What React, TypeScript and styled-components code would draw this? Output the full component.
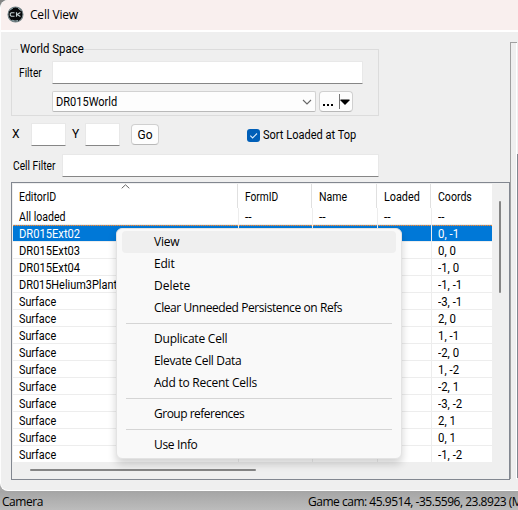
import React from "react";
import styled, { createGlobalStyle } from "styled-components";

const GlobalStyle = createGlobalStyle`
  * { box-sizing: border-box; }
  html, body { margin: 0; padding: 0; overflow: hidden; }
  body { width: 518px; height: 510px; background: #777; }
`;

const Desktop = styled.div`
  position: relative;
  width: 518px;
  height: 510px;
  overflow: hidden;
  display: flex;
  flex-direction: column;
  background: linear-gradient(#858585 0 12px, #a8a8a8 480px);
  font: 12px/16px Roboto, "Liberation Sans", sans-serif;
  color: #000;
`;

const Window = styled.section`
  width: 530px;
  height: 491px;
  flex: none;
  overflow: hidden;
  border-radius: 8px 0 0 8px;
  border-left: 1px solid #fdfdfd;
  border-bottom: 1px solid #fdfdfd;
  background: #efefef;
`;

const TitleBar = styled.header`
  display: flex;
  align-items: center;
  gap: 6px;
  height: 32px;
  margin-left: -1px;
  padding: 0 0 1px 7px;
  background: #f9efee;
  border-bottom: 2px solid #fff;
`;

/* Condensed dialog lettering; $k is the horizontal squeeze. */
const Condensed = styled.span<{ $k?: number }>`
  display: inline-block;
  transform: scaleX(${(p) => p.$k ?? 0.9});
  transform-origin: left center;
  white-space: pre;
`;

const Label = styled.div<{ $w?: number; $indent?: number }>`
  flex: none;
  width: ${(p) => (p.$w ? `${p.$w}px` : "auto")};
  padding-left: ${(p) => p.$indent ?? 0}px;
  white-space: pre;
`;

const Title = styled.h1`
  margin: 0;
  font: 12px/16px "Open Sans", "Noto Sans", sans-serif;
  letter-spacing: -0.2px;
`;

const Client = styled.div`
  display: flex;
  height: 458px;
  padding-left: 10px;
`;

const Main = styled.main`
  display: flex;
  flex-direction: column;
  width: 499px;
  flex: none;
`;

const SidePane = styled.aside`
  width: 7px;
  height: 437px;
  margin-top: 10px;
  border: solid #a0a0a0;
  border-width: 1px 0 0 1px;
  display: flex;
  justify-content: flex-end;
`;

const SideEdge = styled.div`
  width: 1px;
  background: #fff;
`;

const SideList = styled.div`
  width: 2px;
  height: 324px;
  margin-top: 122px;
  border-left: 1px solid #828790;
  background: #fff;
`;

const GroupBox = styled.fieldset`
  width: 368px;
  height: 75px;
  margin: 9px 0 0;
  padding: 4px 0 0 7px;
  min-width: 0;
  border: 1px solid #dcdcdc;
`;

const Legend = styled.legend`
  width: 66px;
  height: 16px;
  margin-left: -1px;
  padding: 0 0 0 2px;
`;

const Line = styled.div`
  display: flex;
  align-items: center;
`;

const TextInput = styled.input<{ $w: number }>`
  flex: none;
  width: ${(p) => p.$w}px;
  height: 23px;
  padding: 0 4px;
  border: 1px solid #e8e8e8;
  border-bottom-color: #868686;
  border-radius: 1px;
  background: #fff;
  outline: none;
`;

const Combo = styled.div`
  display: flex;
  align-items: center;
  justify-content: space-between;
  width: 264px;
  height: 21px;
  padding: 0 3px;
  border: 1px solid #d2d2d2;
  border-bottom-color: #b9b9b9;
  border-radius: 2px;
  background: #fdfdfd;
`;

const Button = styled.button<{ $w: number }>`
  display: flex;
  align-items: center;
  justify-content: center;
  flex: none;
  width: ${(p) => p.$w}px;
  height: 21px;
  padding: 0;
  border: 1px solid #d0d0d0;
  border-bottom-color: #b8b8b8;
  border-radius: 4px;
  background: #fdfdfd;
  color: #000;
  font: inherit;
`;

const ComboLine = styled(Line)`
  gap: 3px;
  margin: 7px 0 0 33px;
`;

const CoordLine = styled(Line)`
  height: 23px;
  margin-top: 7px;
`;

const CoordLabel = styled(Label)`
  height: 18px;
`;

const GoButton = styled(Button)`
  margin-left: 11px;
`;

const Check = styled.div`
  display: flex;
  align-items: center;
  gap: 3px;
  margin-left: 88px;
  padding-top: 1px;
`;

const FilterLine = styled(Line)`
  margin-top: 8px;
`;

const List = styled.div`
  display: flex;
  width: 499px;
  height: 298px;
  margin-top: 5px;
  padding: 1px;
  border: 1px solid #828790;
  background: #efefef;
`;

const ListBody = styled.div`
  width: 479px;
  flex: none;
`;

const Table = styled.div`
  height: 278px;
  overflow: hidden;
  background: #fff;
`;

const columns = "225px 74px 65px 54px 61px";

const HeadRow = styled.div`
  display: grid;
  grid-template-columns: ${columns};
  height: 24px;
`;

const HeadCell = styled.div`
  position: relative;
  padding: 5px 0 0 7px;
  border-right: 1px solid #e0e0e0;
  white-space: pre;
  &:first-child { padding-left: 6px; }
  &:last-child { border-right: 0; }
`;

const SortMark = styled.svg`
  position: absolute;
  left: 108px;
  top: 0;
`;

const Row = styled.div<{ $selected?: boolean }>`
  display: grid;
  grid-template-columns: ${columns};
  height: 17px;
  line-height: 19px;
  background: ${(p) => (p.$selected ? "#0078d7" : "#fff")};
  color: ${(p) => (p.$selected ? "#fff" : "#000")};
  border-bottom: 1px solid #ededed;
  ${(p) =>
    p.$selected &&
    "background-image: repeating-linear-gradient(90deg, #ff8728 0 1px, #4b87b8 1px 2px); background-size: 100% 1px; background-repeat: no-repeat;"}
`;

const Cell = styled.div`
  height: 17px;
  padding-left: 6px;
  border-right: 1px solid #ededed;
  white-space: pre;
  margin: 0 -1px 0 1px;
  &:first-child { padding-left: 5px; }
  &:last-child { border-right: 0; margin-right: 0; }
`;

const HScroll = styled.div`
  height: 16px;
  padding: 7px 0 0 17px;
`;

const HThumb = styled.div`
  width: 226px;
  height: 2px;
  border-radius: 1px;
  background: #858585;
`;

const VScroll = styled.div`
  width: 16px;
  padding: 17px 0 0 7px;
`;

const VThumb = styled.div`
  width: 2px;
  height: 92px;
  border-radius: 1px;
  background: #858585;
`;

const Menu = styled.nav`
  position: absolute;
  left: 116px;
  top: 228px;
  width: 286px;
  height: 231px;
  padding: 2px 5px;
  border: 1px solid #e3e3e3;
  border-radius: 6px;
  background: #f9f9f9;
  box-shadow: 0 5px 9px rgba(0, 0, 0, 0.18);
  font: 12px/22px "Open Sans", "Noto Sans", sans-serif;
`;

const MenuItem = styled.div<{ $active?: boolean; $ls: number }>`
  height: 22px;
  padding-left: 32px;
  border-radius: 4px;
  letter-spacing: ${(p) => p.$ls}px;
  white-space: pre;
  background: ${(p) => (p.$active ? "#efefef" : "transparent")};
`;

const Divider = styled.div`
  height: 1px;
  margin: 4px 4px;
  background: #d5d5d5;
`;

const StatusBar = styled.footer`
  display: flex;
  height: 19px;
  padding-left: 2px;
  background: linear-gradient(#a5a5a5, #bcbcbc);
  font: 12px/21px "Open Sans", "Noto Sans", sans-serif;
`;

const StatusPart = styled.div<{ $w: number; $ls: number }>`
  flex: none;
  width: ${(p) => p.$w}px;
  letter-spacing: ${(p) => p.$ls}px;
  white-space: pre;
`;

const StatusRule = styled.div`
  width: 1px;
  height: 15px;
  margin: 2px 5px 0 0;
  background: #969696;
`;

const rows: [string, string, number][] = [
  ["All loaded", "--", 0.88],
  ["DR015Ext02", "0, -1", 0.93],
  ["DR015Ext03", "0, 0", 0.93],
  ["DR015Ext04", "-1, 0", 0.93],
  ["DR015Helium3Plant", "-1, -1", 0.91],
  ["Surface", "-3, -1", 0.9],
  ["Surface", "2, 0", 0.9],
  ["Surface", "1, -1", 0.9],
  ["Surface", "-2, 0", 0.9],
  ["Surface", "1, -2", 0.9],
  ["Surface", "-2, 1", 0.9],
  ["Surface", "-3, -2", 0.9],
  ["Surface", "2, 1", 0.9],
  ["Surface", "0, 1", 0.9],
  ["Surface", "-1, -2", 0.9],
];

const menu: ([string, number] | null)[] = [
  ["View", -0.2],
  ["Edit", -0.2],
  ["Delete", 0],
  ["Clear Unneeded Persistence on Refs", -0.42],
  null,
  ["Duplicate Cell", -0.22],
  ["Elevate Cell Data", -0.34],
  ["Add to Recent Cells", -0.24],
  null,
  ["Group references", -0.5],
  null,
  ["Use Info", -0.35],
];

const Logo = () => (
  <svg width="17" height="17" viewBox="0 0 17 17">
    <circle cx="8.5" cy="8.5" r="7.5" fill="#080a0c" stroke="#76868a" strokeWidth="1.1" />
    <path d="M3 4 L6 2 M11 2.2 L14 4.5 M5 14.2 L8 15 L11 14.5" stroke="#8fa5aa" strokeWidth="1" fill="none" />
    <path d="M7.5 6.7 H4.3 L3.3 7.5 V9.5 L4.3 10.3 H7.5 M9.5 6.3 V10.7 M13.4 6.5 L10 8.5 L13.4 10.5" stroke="#c2d0d2" strokeWidth="1.1" fill="none" />
  </svg>
);

export default function App() {
  return (
    <>
      <GlobalStyle />
      <Desktop>
        <Window>
          <TitleBar>
            <Logo />
            <Title>Cell View</Title>
          </TitleBar>
          <Client>
            <Main>
              <GroupBox>
                <Legend>
                  <Condensed $k={0.95}>World Space</Condensed>
                </Legend>
                <Line>
                  <Label $w={33}>
                    <Condensed $k={0.85}>Filter</Condensed>
                  </Label>
                  <TextInput $w={311} aria-label="World filter" />
                </Line>
                <ComboLine>
                  <Combo>
                    <Label>
                      <Condensed $k={0.92}>DR015World</Condensed>
                    </Label>
                    <svg width="10" height="6" viewBox="0 0 10 6">
                      <path d="M1 1 L5 5 L9 1" fill="none" stroke="#666" strokeWidth="1.1" />
                    </svg>
                  </Combo>
                  <Button $w={34} aria-label="More">
                    <svg width="28" height="17" viewBox="0 0 28 17">
                      <path d="M1 11h2v2h-2z M5 11h2v2h-2z M9 11h2v2h-2z" fill="#000" />
                      <path d="M17.5 1 V16" stroke="#777" />
                      <path d="M18.5 6.5 H27.5 V7.5 L23 12 L18.5 7.5 Z" fill="#000" />
                    </svg>
                  </Button>
                </ComboLine>
              </GroupBox>
              <CoordLine>
                <CoordLabel $w={20} $indent={1}>X</CoordLabel>
                <TextInput $w={35} aria-label="X" />
                <CoordLabel $w={19} $indent={6}>Y</CoordLabel>
                <TextInput $w={35} aria-label="Y" />
                <GoButton $w={28}>Go</GoButton>
                <Check>
                  <svg width="13" height="13" viewBox="0 0 13 13">
                    <rect width="13" height="13" rx="3" fill="#005fb8" />
                    <path d="M3.3 6.7 L5.6 9 L10 4.5" fill="none" stroke="#d8ebfa" strokeWidth="1.1" />
                  </svg>
                  <Label>
                    <Condensed $k={0.92}>Sort Loaded at Top</Condensed>
                  </Label>
                </Check>
              </CoordLine>
              <FilterLine>
                <Label $w={51} $indent={2}>
                  <Condensed $k={0.85}>Cell Filter</Condensed>
                </Label>
                <TextInput $w={317} aria-label="Cell filter" />
              </FilterLine>
              <List>
                <ListBody>
                  <Table>
                    <HeadRow>
                      <HeadCell>
                        <Condensed $k={0.88}>EditorID</Condensed>
                        <SortMark width="9" height="5" viewBox="0 0 9 5">
                          <path d="M0.7 4.3 L4.5 0.8 L8.3 4.3" fill="none" stroke="#666" strokeWidth="1" />
                        </SortMark>
                      </HeadCell>
                      <HeadCell>
                        <Condensed $k={0.85}>FormID</Condensed>
                      </HeadCell>
                      <HeadCell>
                        <Condensed $k={0.88}>Name</Condensed>
                      </HeadCell>
                      <HeadCell>
                        <Condensed>Loaded</Condensed>
                      </HeadCell>
                      <HeadCell>
                        <Condensed $k={0.88}>Coords</Condensed>
                      </HeadCell>
                    </HeadRow>
                    {rows.map(([name, coords, k], i) => (
                      <Row key={i} $selected={i === 1}>
                        <Cell>
                          <Condensed $k={k}>{name}</Condensed>
                        </Cell>
                        <Cell>{i === 0 ? "--" : ""}</Cell>
                        <Cell>{i === 0 ? "--" : ""}</Cell>
                        <Cell>{i === 0 ? "--" : ""}</Cell>
                        <Cell>
                          <Condensed $k={0.95}>{coords}</Condensed>
                        </Cell>
                      </Row>
                    ))}
                  </Table>
                  <HScroll>
                    <HThumb />
                  </HScroll>
                </ListBody>
                <VScroll>
                  <VThumb />
                </VScroll>
              </List>
            </Main>
            <SidePane>
              <SideEdge />
            </SidePane>
            <SideList />
          </Client>
        </Window>
        <StatusBar>
          <StatusPart $w={301} $ls={-0.45}>Camera</StatusPart>
          <StatusRule />
          <StatusPart $w={211} $ls={-0.48}>Game cam: 45.9514, -35.5596, 23.8923 (M</StatusPart>
        </StatusBar>
        <Menu>
          {menu.map((item, i) =>
            item ? (
              <MenuItem key={i} $active={i === 0} $ls={item[1]}>
                {item[0]}
              </MenuItem>
            ) : (
              <Divider key={i} />
            )
          )}
        </Menu>
      </Desktop>
    </>
  );
}
